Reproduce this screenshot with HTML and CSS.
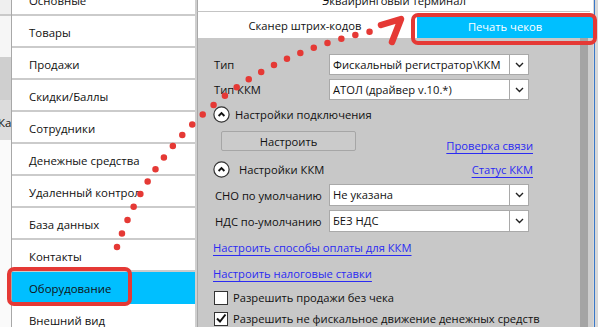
FILE: index.html
```html
<!DOCTYPE html>
<html lang="ru">
<head>
<meta charset="utf-8">
<title>Оборудование</title>
<link rel="stylesheet" href="styles.css">
</head>
<body>
<div class="app">
  <div class="edge">
    <div class="e1"></div>
    <div class="e2"></div>
    <div class="e3"></div>
    <div class="e4"></div>
    <div class="e5"><span>Ка</span></div>
    <div class="e6"></div>
  </div>
  <nav class="sidebar">
    <ul class="menu">
      <li>Основные</li>
      <li>Товары</li>
      <li>Продажи</li>
      <li>Скидки/Баллы</li>
      <li>Сотрудники</li>
      <li>Денежные средства</li>
      <li>Удаленный контрол</li>
      <li>База данных</li>
      <li>Контакты</li>
      <li class="active">Оборудование</li>
      <li>Внешний вид</li>
    </ul>
  </nav>
  <main class="main">
    <div class="tabrow1"><span>Эквайринговый терминал</span></div>
    <div class="tabrow2">
      <div class="tab">Сканер штрих-кодов</div>
      <div class="tab tab-active">Печать чеков</div>
    </div>
    <div class="panel">
      <div class="form">
        <div class="grid">
          <span class="label">Тип</span>
          <div class="select"><span class="val">Фискальный регистратор\ККМ</span><span class="dd"><svg width="9" height="6" viewBox="0 0 9 6"><polyline points="1,1 4.5,4.5 8,1" fill="none" stroke="#222" stroke-width="1.4"/></svg></span></div>
          <span class="label">Тип ККМ</span>
          <div class="select"><span class="val">АТОЛ (драйвер v.10.*)</span><span class="dd"><svg width="9" height="6" viewBox="0 0 9 6"><polyline points="1,1 4.5,4.5 8,1" fill="none" stroke="#222" stroke-width="1.4"/></svg></span></div>
        </div>
        <div class="section s1">
          <svg class="circ" width="17" height="17" viewBox="0 0 17 17"><circle cx="8.5" cy="8.5" r="7.6" fill="#fff" stroke="#333" stroke-width="1.2"/><polyline points="5.6,10 8.5,7.1 11.4,10" fill="none" stroke="#111" stroke-width="1.9"/></svg>
          <span class="sec-title">Настройки подключения</span>
        </div>
        <div class="btnrow">
          <button class="btn">Настроить</button>
          <a class="link" href="#">Проверка связи</a>
        </div>
        <div class="section s2">
          <svg class="circ" width="17" height="17" viewBox="0 0 17 17"><circle cx="8.5" cy="8.5" r="7.6" fill="#fff" stroke="#333" stroke-width="1.2"/><polyline points="5.6,10 8.5,7.1 11.4,10" fill="none" stroke="#111" stroke-width="1.9"/></svg>
          <span class="sec-title wide">Настройки ККМ</span>
          <a class="link push" href="#">Статус ККМ</a>
        </div>
        <div class="grid g2">
          <span class="label">СНО по умолчанию</span>
          <div class="select"><span class="val">Не указана</span><span class="dd"><svg width="9" height="6" viewBox="0 0 9 6"><polyline points="1,1 4.5,4.5 8,1" fill="none" stroke="#222" stroke-width="1.4"/></svg></span></div>
          <span class="label">НДС по-умолчанию</span>
          <div class="select"><span class="val">БЕЗ НДС</span><span class="dd"><svg width="9" height="6" viewBox="0 0 9 6"><polyline points="1,1 4.5,4.5 8,1" fill="none" stroke="#222" stroke-width="1.4"/></svg></span></div>
        </div>
        <a class="link block l1" href="#">Настроить способы оплаты для ККМ</a>
        <a class="link block l2" href="#">Настроить налоговые ставки</a>
        <label class="check c1"><span class="box"></span>Разрешить продажи без чека</label>
        <label class="check c2"><span class="box"><svg width="12" height="11" viewBox="0 0 12 11"><polyline points="2,5.5 5,8.5 10.5,1.5" fill="none" stroke="#111" stroke-width="2"/></svg></span>Разрешить не фискальное движение денежных средств</label>
      </div>
      <div class="scroll"></div>
      <div class="scroll2"></div>
    </div>
  </main>
  <div class="rightedge"><div class="bl"></div></div>
</div>
<div class="mark mark-side"></div>
<div class="mark mark-tab"></div>
<svg class="arrow" width="598" height="327" viewBox="0 0 598 327">
  <path d="M117,247 C150,150 230,60 373,31" fill="none" stroke="#e53935" stroke-width="6.5" stroke-linecap="round" stroke-dasharray="0 14.5"/>
  <polyline points="381,25 401,19 392,42" fill="none" stroke="#e53935" stroke-width="6.5" stroke-linecap="round" stroke-linejoin="round"/>
</svg>
</body>
</html>
```
FILE: styles.css
```css
* { box-sizing: border-box; }
html, body { margin: 0; padding: 0; }
body {
  width: 598px;
  height: 327px;
  overflow: hidden;
  position: relative;
  font-family: "Open Sans", "Noto Sans", sans-serif;
  font-size: 11.2px;
  color: #111;
  background: #fff;
}
.app { display: flex; height: 327px; }

/* left sliver of an underlying window */
.edge { width: 11px; display: flex; flex-direction: column; overflow: hidden; }
.e1 { height: 14px; background: #efefef; }
.e2 { height: 2px; background: #c9c9c9; }
.e3 { height: 41px; background: #f6f6f6; }
.e4 { height: 43px; background: #cfcfcf; }
.e5 { height: 40px; background: #dcdcdc; display: flex; align-items: flex-end; padding-bottom: 10px; }
.e5 span { margin-left: -2px; font-size: 11.5px; white-space: nowrap; line-height: 14px; }
.e6 { flex: 1; background: #fafafa; }

/* sidebar */
.sidebar {
  width: 186px;
  border-left: 1px solid #a8a8a8;
  border-right: 2px solid #cfcfcf;
  background: #fff;
  overflow: hidden;
}
.menu { list-style: none; margin: -16px 0 0; padding: 0; }
.menu li {
  height: 32px;
  border-bottom: 2px solid #cbcbcb;
  padding: 8px 0 0 17px;
  font-size: 11.4px;
  line-height: 17px;
  white-space: nowrap;
}
.menu li.active { background: #00bfff; border-bottom-color: #00bfff; }

/* main */
.main { flex: 1; display: flex; flex-direction: column; min-width: 0; }
.tabrow1 {
  height: 13px;
  background: #fff;
  border-bottom: 1px solid #c4c4c4;
  border-left: 1px solid #a8a8a8;
  margin-right: 3px;
  text-align: center;
  overflow: hidden;
}
.tabrow1 span { display: block; margin-top: -9px; line-height: 20px; }
.tabrow2 {
  height: 26px;
  display: flex;
  background: #fff;
  border-left: 1px solid #a8a8a8;
}
.tab { flex: 1; text-align: center; line-height: 26px; padding-top: 1px; }
.tab-active {
  flex: 0 0 176px;
  margin: 5px 0 0 5px;
  background: #00bfff;
  color: #fff;
  line-height: 20px;
  padding-top: 0;
}
.panel { flex: 1; display: flex; background: #c8c8c8; border-left: 1px solid #a8a8a8; }
.form { flex: 1; padding: 16px 0 0 16px; }
.scroll { width: 8px; background: #a4a4a4; }
.scroll2 { width: 5px; background: #cdcdcd; }
.rightedge { width: 5px; background: #d8d8d8; display: flex; }
.rightedge .bl { width: 1px; margin-left: 1px; background: #3a78c8; }

.grid {
  width: 316px;
  display: grid;
  grid-template-columns: 115px 200px;
  row-gap: 4px;
  align-items: center;
}
.label { white-space: nowrap; }
.select {
  height: 21px;
  display: flex;
  background: #fff;
  border: 1px solid #a9a9a9;
}
.select .val { flex: 1; padding-left: 3px; line-height: 19px; white-space: nowrap; overflow: hidden; }
.select .dd { width: 19px; border-left: 1px solid #a9a9a9; display: flex; align-items: center; justify-content: center; }
.g2 { margin-top: 6px; }
.g2 .select { height: 22px; }
.g2 .select .val { line-height: 20px; }
.g2 .label { padding-left: 1px; }

.section { width: 320px; height: 17px; display: flex; align-items: center; margin-left: -1px; }
.s1 { margin-top: 6px; }
.s2 { margin-top: 10px; }
.sec-title { margin-left: 5px; white-space: nowrap; }
.sec-title.wide { margin-left: 9px; }
.push { margin-left: auto; }

.btnrow { width: 319px; height: 20px; margin-top: 8px; display: flex; align-items: flex-end; justify-content: space-between; }
.btn {
  margin-left: 7px;
  width: 135px;
  height: 20px;
  padding: 0;
  font: inherit;
  color: #111;
  background: #cbcbcb;
  border: 1px solid #a6a6a6;
  border-radius: 2px;
  line-height: 17px;
}
.link {
  color: #2b2bf2;
  text-decoration: underline;
  text-underline-offset: 3px;
  white-space: nowrap;
  line-height: 17px;
}
.btnrow .link { margin-bottom: -3px; }
.block { display: block; width: max-content; margin-left: -1px; }
.l1 { margin-top: 7px; }
.l2 { margin-top: 9px; }

.check { display: flex; align-items: center; height: 17px; white-space: nowrap; }
.c1 { margin-top: 7px; }
.c2 { margin-top: 4px; }
.box {
  width: 14px;
  height: 14px;
  margin-right: 5px;
  background: #fff;
  border: 1px solid #333;
  display: flex;
  align-items: center;
  justify-content: center;
}

/* annotation overlays */
.mark {
  position: absolute;
  border: 4px solid #e53935;
  border-radius: 7px;
}
.mark-side { left: 7px; top: 267px; width: 125px; height: 39px; }
.mark-tab { left: 411px; top: 13px; width: 186px; height: 32px; }
.arrow { position: absolute; left: 0; top: 0; pointer-events: none; }
```
